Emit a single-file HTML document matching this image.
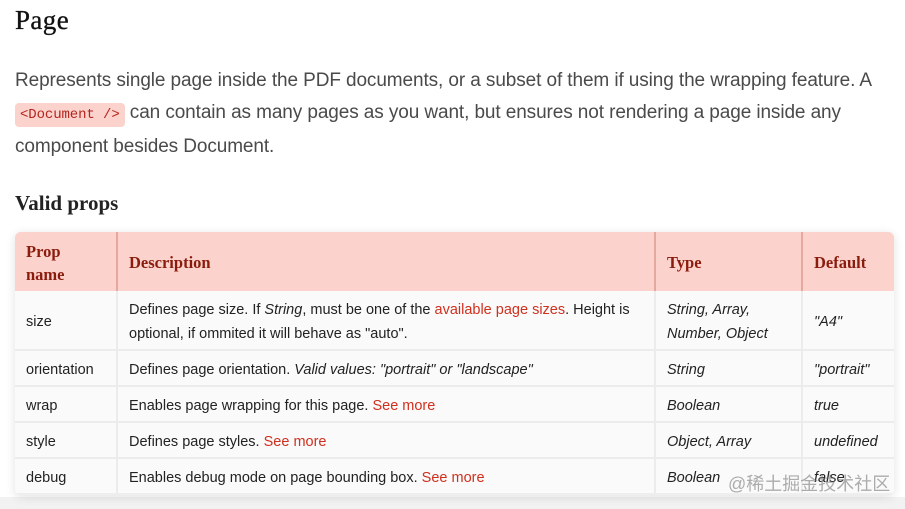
<!DOCTYPE html>
<html><head><style>
body{margin:0;background:#fff;width:905px;height:509px;overflow:hidden;position:relative;font-family:"Liberation Sans",sans-serif;}
h1{position:absolute;left:15px;top:5px;margin:0;font-family:"Liberation Serif",serif;font-size:27px;font-weight:normal;color:#111;letter-spacing:0.4px;-webkit-text-stroke:0.3px #111}
p{position:absolute;left:15px;top:65px;width:890px;margin:0;font-size:19px;line-height:32px;color:#4a4a4a;letter-spacing:-0.1px;white-space:nowrap}
code{font-family:"Liberation Mono",monospace;font-size:14px;color:#b3261e;background:#fbd2cc;border-radius:4px;padding:4px 5px;}
h2{position:absolute;left:15px;top:191px;margin:0;font-family:"Liberation Serif",serif;font-size:21px;font-weight:bold;color:#222}
.bottom{position:absolute;left:0;top:497px;width:905px;height:12px;background:#f2f2f2}
.tbl{position:absolute;left:15px;top:232px;width:879px;height:263px;border-radius:6px;overflow:hidden;box-shadow:0 2px 10px rgba(0,0,0,.12);background:#eee}
table{border-collapse:collapse;width:100%;font-size:14.5px;color:#222}
th{background:#fbd2cc;color:#8a1c0e;font-family:"Liberation Serif",serif;font-weight:bold;text-align:left;font-size:16.5px;height:57px;padding:2px 11px 0;border-right:2px solid #e5a89e;line-height:23px}
th:last-child{border-right:none}
td{background:#fafafa;border:2px solid #ececec;border-top:none;padding:3px 11px 0;height:31px;line-height:24px}
td:first-child{border-left:none}td:last-child{border-right:none}
tr.r1 td{height:55px}
tr:last-child td{border-bottom:none}
i{font-style:italic}
a{color:#d0301e;text-decoration:none}
.wm{position:absolute;left:728px;top:470px;font-family:"Liberation Sans","Noto Sans CJK SC",sans-serif;font-size:18px;color:rgba(120,120,120,.6)}
</style></head><body>
<h1>Page</h1>
<p>Represents single page inside the PDF documents, or a subset of them if using the wrapping feature. A<br><code>&lt;Document /&gt;</code> can contain as many pages as you want, but ensures not rendering a page inside any<br>component besides Document.</p>
<h2>Valid props</h2>
<div class="bottom"></div>
<div class="tbl"><table>
<colgroup><col style="width:102px"><col style="width:538px"><col style="width:147px"><col></colgroup>
<tr><th>Prop<br>name</th><th>Description</th><th>Type</th><th>Default</th></tr>
<tr class="r1"><td>size</td><td>Defines page size. If <i>String</i>, must be one of the <a>available page sizes</a>. Height is<br>optional, if ommited it will behave as "auto".</td><td><i>String, Array,<br>Number, Object</i></td><td><i>"A4"</i></td></tr>
<tr><td>orientation</td><td>Defines page orientation. <i>Valid values: "portrait" or "landscape"</i></td><td><i>String</i></td><td><i>"portrait"</i></td></tr>
<tr><td>wrap</td><td>Enables page wrapping for this page. <a>See more</a></td><td><i>Boolean</i></td><td><i>true</i></td></tr>
<tr><td>style</td><td>Defines page styles. <a>See more</a></td><td><i>Object, Array</i></td><td><i>undefined</i></td></tr>
<tr><td>debug</td><td>Enables debug mode on page bounding box. <a>See more</a></td><td><i>Boolean</i></td><td><i>false</i></td></tr>
</table></div>
<div class="wm">@稀土掘金技术社区</div>
</body></html>
